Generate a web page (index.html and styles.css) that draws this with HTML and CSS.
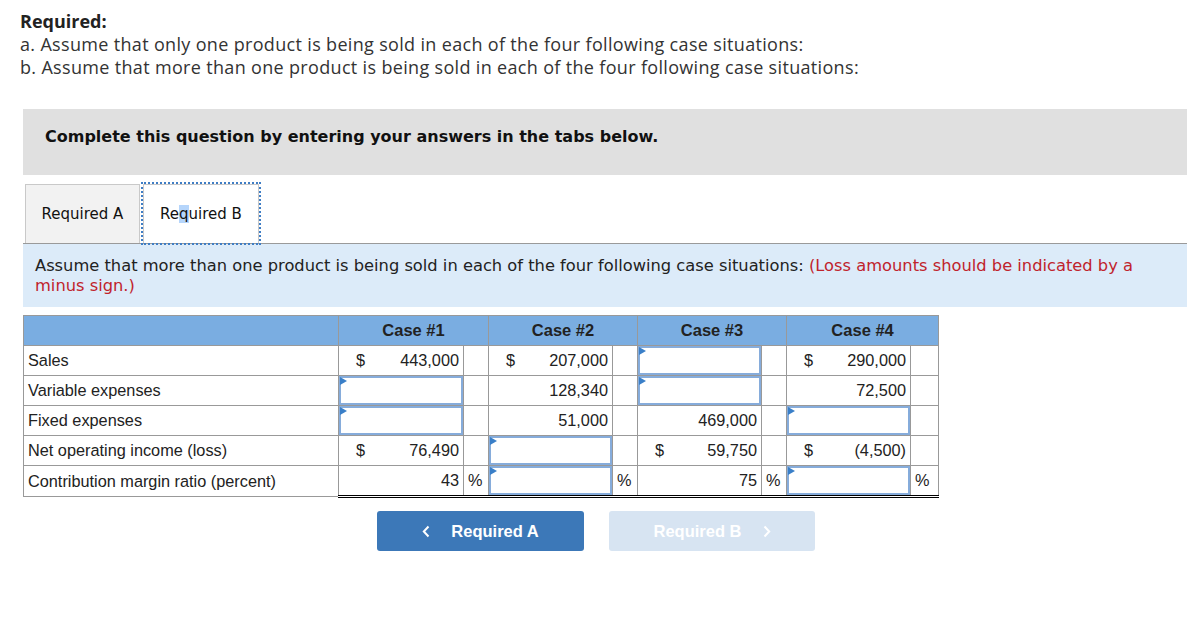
FILE: index.html
```html
<!DOCTYPE html>
<html>
<head>
<meta charset="utf-8">
<link rel="stylesheet" href="styles.css">
</head>
<body>
<div class="page">
  <div class="req">
    <p class="req-title">Required:</p>
    <p>a. Assume that only one product is being sold in each of the four following case situations:</p>
    <p>b. Assume that more than one product is being sold in each of the four following case situations:</p>
  </div>

  <div class="main">
    <div class="bar">Complete this question by entering your answers in the tabs below.</div>

    <div class="tabs">
      <div class="tab tab-a">Required A</div>
      <div class="tab tab-b">Re<span class="sel">q</span>uired B</div>
    </div>

    <div class="instr">Assume that more than one product is being sold in each of the four following case situations: <span class="red">(Loss amounts should be indicated by a</span> <span class="red">minus sign.)</span></div>

    <table class="grid">
      <colgroup>
        <col class="c-label">
        <col class="c-val1"><col class="c-unit">
        <col class="c-val"><col class="c-unit">
        <col class="c-val"><col class="c-unit">
        <col class="c-val"><col class="c-unit4">
      </colgroup>
      <thead>
        <tr>
          <th class="lab"></th>
          <th colspan="2">Case #1</th>
          <th colspan="2">Case #2</th>
          <th colspan="2">Case #3</th>
          <th colspan="2">Case #4</th>
        </tr>
      </thead>
      <tbody>
        <tr>
          <td class="lab">Sales</td>
          <td class="v"><div class="cell"><span class="cur">$</span><span class="num">443,000</span></div></td><td class="u"></td>
          <td class="v"><div class="cell"><span class="cur">$</span><span class="num">207,000</span></div></td><td class="u"></td>
          <td class="v"><div class="inp"></div></td><td class="u"></td>
          <td class="v"><div class="cell"><span class="cur">$</span><span class="num">290,000</span></div></td><td class="u"></td>
        </tr>
        <tr>
          <td class="lab">Variable expenses</td>
          <td class="v"><div class="inp"></div></td><td class="u"></td>
          <td class="v"><div class="cell"><span class="num">128,340</span></div></td><td class="u"></td>
          <td class="v"><div class="inp"></div></td><td class="u"></td>
          <td class="v"><div class="cell"><span class="num">72,500</span></div></td><td class="u"></td>
        </tr>
        <tr>
          <td class="lab">Fixed expenses</td>
          <td class="v"><div class="inp"></div></td><td class="u"></td>
          <td class="v"><div class="cell"><span class="num">51,000</span></div></td><td class="u"></td>
          <td class="v"><div class="cell"><span class="num">469,000</span></div></td><td class="u"></td>
          <td class="v"><div class="inp"></div></td><td class="u"></td>
        </tr>
        <tr class="tot">
          <td class="lab">Net operating income (loss)</td>
          <td class="v"><div class="cell"><span class="cur">$</span><span class="num">76,490</span></div></td><td class="u"></td>
          <td class="v"><div class="inp"></div></td><td class="u"></td>
          <td class="v"><div class="cell"><span class="cur">$</span><span class="num">59,750</span></div></td><td class="u"></td>
          <td class="v"><div class="cell"><span class="cur">$</span><span class="num">(4,500)</span></div></td><td class="u"></td>
        </tr>
        <tr class="tot last">
          <td class="lab">Contribution margin ratio (percent)</td>
          <td class="v"><div class="cell"><span class="num">43</span></div></td><td class="u">%</td>
          <td class="v"><div class="inp"></div></td><td class="u">%</td>
          <td class="v"><div class="cell"><span class="num">75</span></div></td><td class="u">%</td>
          <td class="v"><div class="inp"></div></td><td class="u">%</td>
        </tr>
      </tbody>
    </table>

    <div class="nav">
      <div class="btn btn-prev"><svg class="chev" width="8" height="13" viewBox="0 0 8 13"><polyline points="6.5,1.5 1.8,6.5 6.5,11.5" fill="none" stroke="#fff" stroke-width="2"/></svg>Required A</div>
      <div class="btn btn-next">Required B<svg class="chev chev-r" width="8" height="13" viewBox="0 0 8 13"><polyline points="1.5,1.5 6.2,6.5 1.5,11.5" fill="none" stroke="#fff" stroke-width="2"/></svg></div>
    </div>
  </div>
</div>
</body>
</html>
```

FILE: styles.css
```css
* { box-sizing: border-box; }
html, body { margin: 0; padding: 0; background: #fff; }
body { font-family: "Open Sans", "Liberation Sans", sans-serif; color: #222; }

.page { padding: 10px 0 0 0; }

.req { padding-left: 20px; font-size: 18px; line-height: 23px; letter-spacing: 0.33px; color: #333; }
.req p { margin: 0; }
.req .req-title { font-weight: 700; color: #222; letter-spacing: 0; }

.main { margin-left: 23px; margin-top: 30px; }

.bar {
  background: #e0e0e0;
  height: 66px;
  padding: 17px 0 0 22px;
  font-family: "DejaVu Sans", Verdana, sans-serif;
  font-weight: 700;
  font-size: 16px;
  line-height: 22px;
  color: #111;
}

.tabs {
  display: flex;
  margin-top: 9px;
  padding-left: 2px;
  border-bottom: 1px solid #9a9a9a;
  height: 60px;
}
.tab {
  height: 59px;
  border: 1px solid #c9c9c9;
  border-bottom: none;
  font-family: "DejaVu Sans", Verdana, sans-serif;
  font-size: 15px;
  color: #111;
  display: flex;
  align-items: center;
  justify-content: center;
}
.tab-a { width: 115px; background: #f2f2f2; }
.tab-b {
  width: 116px;
  margin-left: 3px;
  background: #fff;
  outline: 2px dotted #3f7dc4;
  outline-offset: 0px;
}
.sel { background: #b5d5fb; }

.instr {
  background: #dcebf9;
  padding: 12px 40px 11px 12px;
  font-family: "DejaVu Sans", Verdana, sans-serif;
  font-size: 16.3px;
  line-height: 19.5px;
  color: #222;
  height: 63px;
}
.red { color: #c0232c; }

.grid {
  margin-top: 8px;
  border-collapse: collapse;
  table-layout: fixed;
  width: 916px;
  font-family: "Liberation Sans", Arial, sans-serif;
  font-size: 16.3px;
  color: #222;
}
.c-label { width: 315px; }
.c-val1 { width: 125px; }
.c-val { width: 124px; }
.c-unit { width: 25px; }
.c-unit4 { width: 28px; }

.grid th, .grid td {
  border: 1px solid #999;
  padding: 0;
  height: 30px;
}
.grid th {
  background: #7aade1;
  font-weight: 700;
  font-size: 16.5px;
  text-align: center;
  color: #222;
}
.grid td.lab { padding-left: 4px; text-align: left; }
.grid td.u { text-align: left; padding-left: 4px; }

.grid tr.tot td.v, .grid tr.tot td.u { border-top: 1px solid #000; }
.grid tr.last td.v, .grid tr.last td.u { border-bottom: 3px double #000; }

.cell {
  display: flex;
  justify-content: space-between;
  align-items: center;
  padding: 0 4px 0 17px;
}
.cell .num { margin-left: auto; }

.inp {
  position: relative;
  height: 29px;
  border: 2px solid #86acdb;
  background: #fff;
}
.inp::before {
  content: "";
  position: absolute;
  left: -1px;
  top: -1px;
  border-top: 4px solid transparent;
  border-bottom: 4px solid transparent;
  border-left: 7px solid #3a7fc8;
}

.nav {
  display: flex;
  gap: 25px;
  margin-top: 13px;
  padding-left: 354px;
}
.btn {
  width: 207px;
  height: 40px;
  border-radius: 3px;
  display: flex;
  align-items: center;
  justify-content: center;
  font-family: "Liberation Sans", Arial, sans-serif;
  font-weight: 700;
  font-size: 16.5px;
  color: #fff;
}
.btn-prev { background: #3c78b8; }
.btn-next { background: #d7e4f2; width: 206px; }
.chev { display: block; margin-right: 21px; }
.chev-r { margin-right: 0; margin-left: 21px; }
```
